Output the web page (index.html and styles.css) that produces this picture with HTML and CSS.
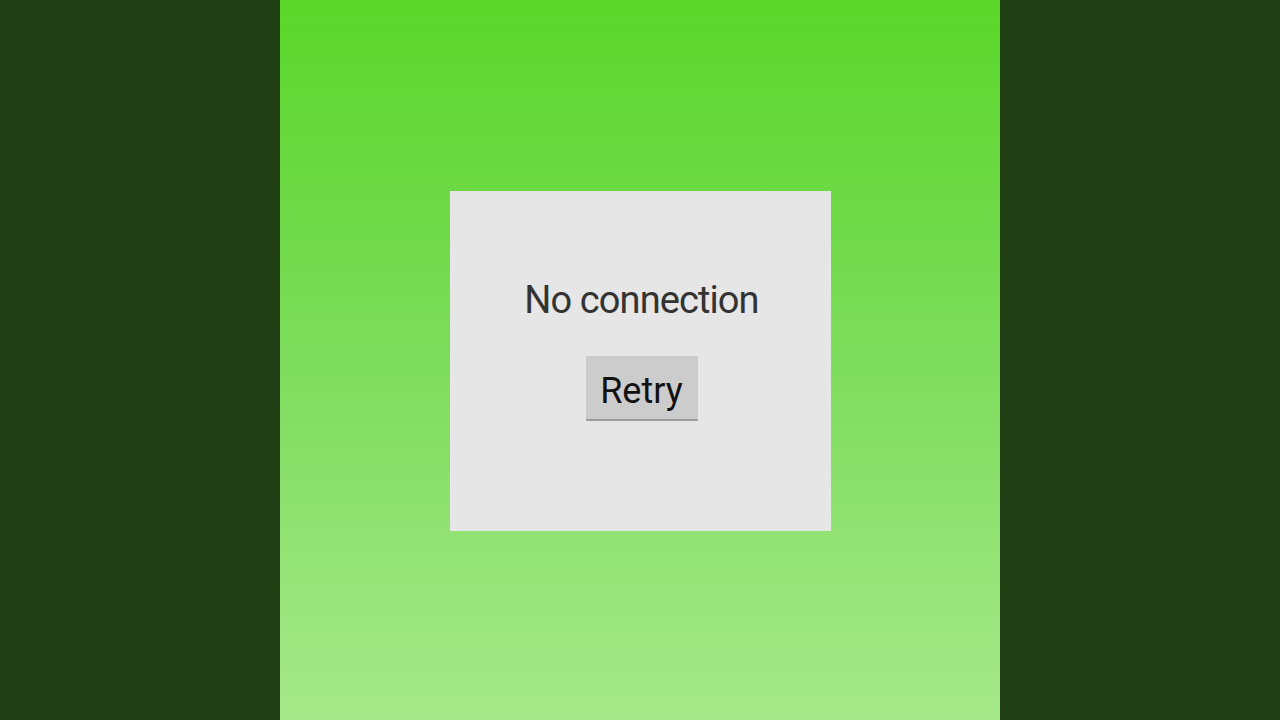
FILE: index.html
```html
<!DOCTYPE html>
<html>
<head>
<meta charset="utf-8">
<link rel="stylesheet" href="styles.css">
</head>
<body>
<div class="side"></div>
<main class="stage">
  <section class="card">
    <p class="msg">No connection</p>
    <button class="retry">Retry</button>
  </section>
</main>
<div class="side"></div>
</body>
</html>
```
FILE: styles.css
```css
html, body {
  margin: 0;
  padding: 0;
  height: 100%;
}
body {
  display: flex;
  width: 1280px;
  height: 720px;
  overflow: hidden;
  background: #213f14;
  font-family: Roboto, "Noto Sans", sans-serif;
}
.side {
  width: 280px;
  background: #213f14;
}
.stage {
  width: 720px;
  background: linear-gradient(to bottom, #5ad629 0%, #7ddc5c 50%, #a6e98a 100%);
  display: flex;
  justify-content: center;
  align-items: flex-start;
  padding-top: 191px;
  box-sizing: border-box;
}
.card {
  width: 381px;
  height: 340px;
  margin-left: 1px;
  background: #e6e6e6;
  display: flex;
  flex-direction: column;
  align-items: center;
  box-sizing: border-box;
  padding-top: 80px;
}
.msg {
  margin: 0 0 0 2px;
  font-size: 38px;
  line-height: 58px;
  color: #333333;
  letter-spacing: -0.9px;
}
.retry {
  margin-top: 27px;
  margin-left: 2px;
  width: 112px;
  height: 65px;
  background: #cccccc;
  border: none;
  border-bottom: 2px solid #9c9c9c;
  border-radius: 1px;
  font-family: Roboto, "Noto Sans", sans-serif;
  font-size: 36px;
  color: #111111;
  padding: 6px 0 0 0;
}
```
